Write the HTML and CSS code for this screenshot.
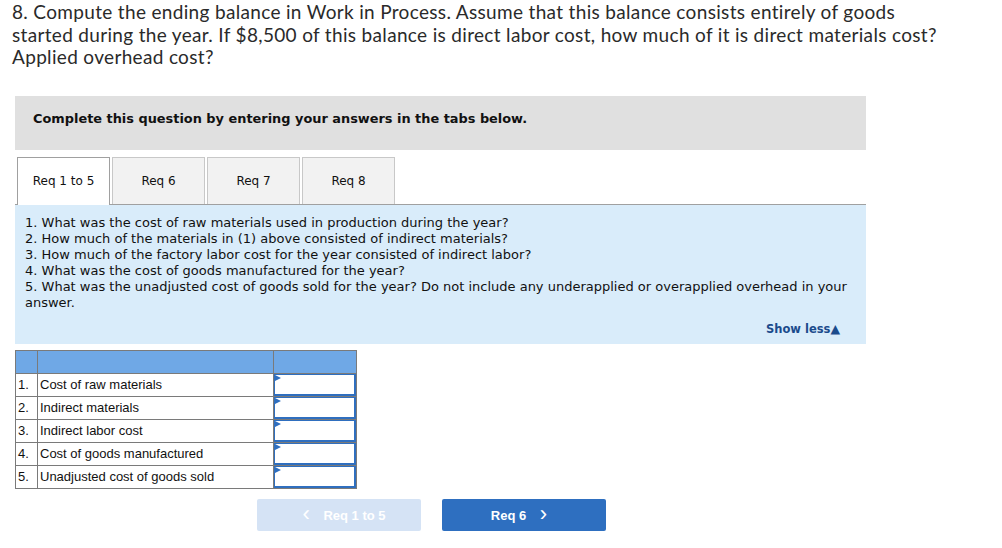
FILE: index.html
```html
<!DOCTYPE html>
<html lang="en">
<head>
    <meta charset="UTF-8">
    <title>Req 1 to 5</title>
    <link rel="stylesheet" href="styles.css">
</head>
<body>
    <p class="question">8. Compute the ending balance in Work in Process. Assume that this balance consists entirely of goods started during the year. If $8,500 of this balance is direct labor cost, how much of it is direct materials cost? Applied overhead cost?</p>

    <div class="wrap">
        <div class="notice">Complete this question by entering your answers in the tabs below.</div>

        <ul class="tabs">
            <li class="active">Req 1 to 5</li>
            <li>Req 6</li>
            <li>Req 7</li>
            <li>Req 8</li>
        </ul>

        <div class="panel">
            <ol class="reqs">
                <li>1. What was the cost of raw materials used in production during the year?</li>
                <li>2. How much of the materials in (1) above consisted of indirect materials?</li>
                <li>3. How much of the factory labor cost for the year consisted of indirect labor?</li>
                <li>4. What was the cost of goods manufactured for the year?</li>
                <li>5. What was the unadjusted cost of goods sold for the year? Do not include any underapplied or overapplied overhead in your answer.</li>
            </ol>
            <div class="show-less"><a href="#">Show less<span class="tri">&#9650;</span></a></div>
        </div>

        <table class="answers">
            <tr class="head"><th></th><th></th><th></th></tr>
            <tr><td class="num">1.</td><td>Cost of raw materials</td><td class="input"><span></span></td></tr>
            <tr><td class="num">2.</td><td>Indirect materials</td><td class="input"><span></span></td></tr>
            <tr><td class="num">3.</td><td>Indirect labor cost</td><td class="input"><span></span></td></tr>
            <tr><td class="num">4.</td><td>Cost of goods manufactured</td><td class="input"><span></span></td></tr>
            <tr><td class="num">5.</td><td>Unadjusted cost of goods sold</td><td class="input"><span></span></td></tr>
        </table>

        <div class="nav">
            <button class="prev" disabled><span class="chev">&lsaquo;</span> Req 1 to 5</button>
            <button class="next">Req 6 <span class="chev">&rsaquo;</span></button>
        </div>
    </div>
</body>
</html>
```

FILE: styles.css
```css
body {
    margin: 0;
    background-color: #fff;
    color: #222;
}

.question {
    margin: 0;
    padding: 1px 0 0 12px;
    width: 940px;
    font-family: "Lato", "Open Sans", sans-serif;
    font-size: 19px;
    letter-spacing: 0.33px;
    line-height: 22.5px;
    color: #2a2a2a;
}

.wrap {
    margin: 27px 0 0 15px;
    width: 851px;
}

.notice {
    background-color: #e0e0e0;
    height: 40px;
    padding: 14px 0 0 18px;
    font-family: "DejaVu Sans", Verdana, sans-serif;
    font-weight: bold;
    font-size: 12.9px;
    line-height: 17px;
    color: #111;
}

.tabs {
    list-style: none;
    margin: 7px 0 0 2px;
    padding: 0;
    display: flex;
    gap: 2px;
}

.tabs li {
    width: 91px;
    height: 46px;
    border: 1px solid #c8c8c8;
    border-bottom: none;
    background-color: #f2f2f2;
    display: flex;
    align-items: center;
    justify-content: center;
    font-family: "DejaVu Sans", Verdana, sans-serif;
    font-size: 12px;
    color: #111;
}

.tabs li.active {
    background-color: #fff;
    border-color: #a0a0a0;
    height: 47px;
    margin-bottom: -1px;
}

.panel {
    background-color: #d9ecfa;
    border-top: 1px solid #a0a0a0;
    padding: 10px 14px 8px 10px;
    height: 121px;
}

.reqs {
    list-style: none;
    margin: 0;
    padding: 0;
    font-family: "DejaVu Sans", Verdana, sans-serif;
    font-size: 13px;
    line-height: 16px;
    color: #111;
}

.show-less {
    text-align: right;
    margin-top: 8px;
    padding-right: 12px;
}

.show-less a {
    font-family: "DejaVu Sans", Verdana, sans-serif;
    font-weight: bold;
    font-size: 11.5px;
    color: #1b4b8c;
    text-decoration: none;
}

.show-less .tri {
    font-size: 12.5px;
}

.answers {
    margin-top: 6px;
    border-collapse: collapse;
    font-family: "Liberation Sans", Arial, sans-serif;
    font-size: 13px;
    color: #111;
}

.answers th,
.answers td {
    border: 1px solid #7a7a7a;
    height: 23px;
    padding: 0 2px;
    box-sizing: border-box;
}

.answers .head th {
    background-color: #6fa8e6;
}

.answers th:nth-child(1), .answers td.num { width: 22px; }
.answers th:nth-child(2) { width: 236px; }
.answers th:nth-child(3), .answers td.input { width: 83px; }

.answers td.input {
    padding: 0;
    position: relative;
}

.answers td.input span {
    display: block;
    height: 22px;
    border: 2px solid #2f6fbf;
    border-width: 1px 2px 2px 1px;
    box-sizing: border-box;
}

.answers td.input span::before {
    content: "";
    position: absolute;
    top: 1px;
    left: 1px;
    border-left: 6px solid #2f6fbf;
    border-top: 3px solid transparent;
    border-bottom: 3px solid transparent;
}

.nav {
    display: flex;
    gap: 21px;
    margin: 10px 0 0 242px;
}

.nav button {
    width: 164px;
    height: 32px;
    border: none;
    border-radius: 2px;
    font-family: "Liberation Sans", Arial, sans-serif;
    font-weight: bold;
    font-size: 13px;
    color: #fff;
}

.nav .prev {
    background-color: #d5e3f5;
}

.nav .next {
    background-color: #2e6fc0;
}

.nav .chev {
    font-size: 22px;
    font-weight: normal;
    line-height: 13px;
    margin: 0 10px;
    position: relative;
    top: 1px;
}
```
